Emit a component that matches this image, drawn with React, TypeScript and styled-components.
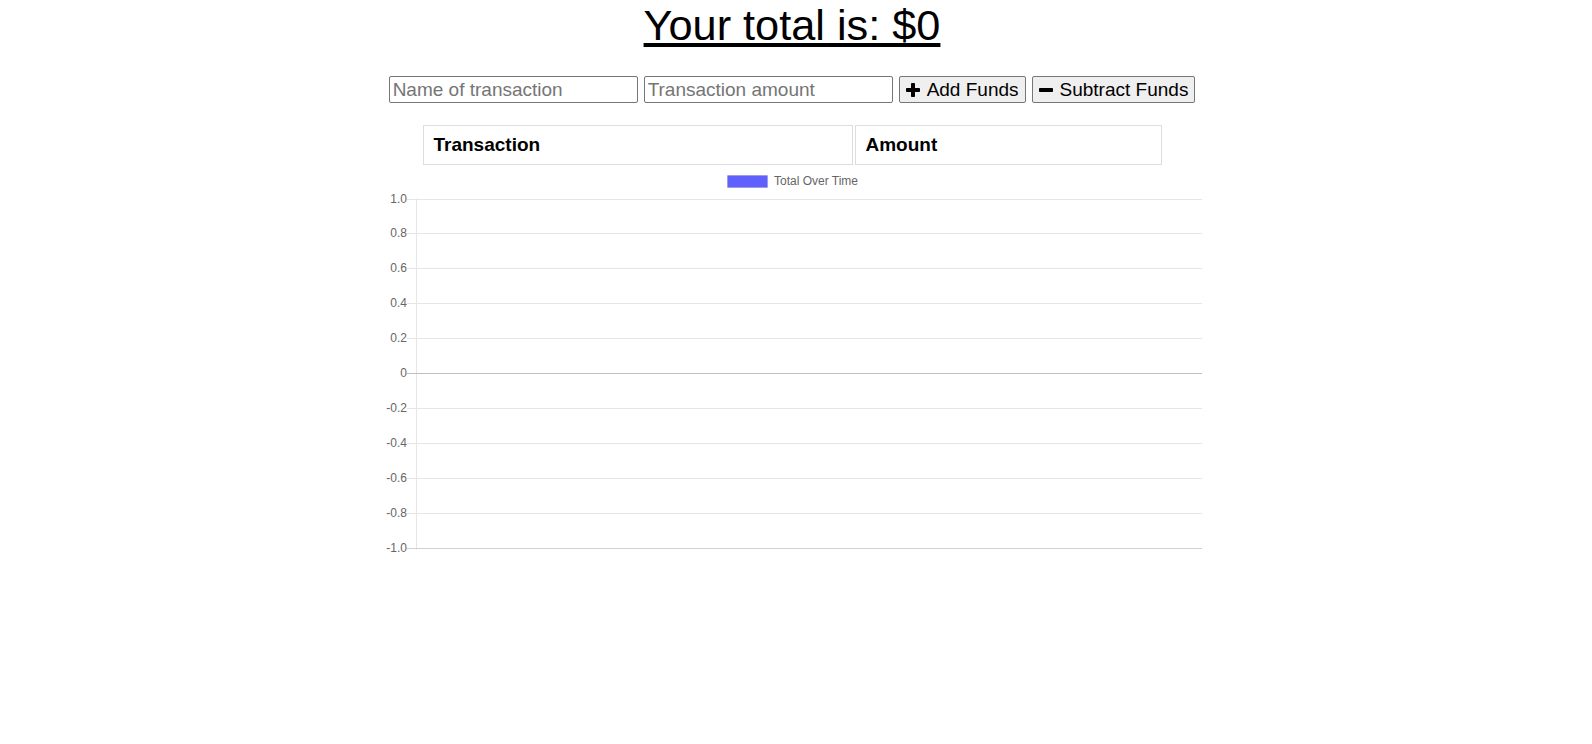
import styled, { createGlobalStyle } from "styled-components";

const GlobalStyle = createGlobalStyle`
  body {
    margin: 0;
    background: #fff;
    font-family: "Liberation Sans", Arial, sans-serif;
  }
`;

const Page = styled.div`
  display: flex;
  flex-direction: column;
  align-items: center;
  padding-right: 8px;
`;

const Total = styled.h1`
  margin: 1px 0 0;
  font-size: 43.3px;
  line-height: 49px;
  font-weight: 400;
  color: #000;
  text-decoration: underline;
`;

const Form = styled.div`
  display: flex;
  gap: 6px;
  margin-top: 26px;
`;

const Field = styled.input`
  box-sizing: border-box;
  width: 249px;
  height: 27px;
  padding: 1px 3px;
  border: 1px solid #767676;
  border-radius: 2px;
  background: #fff;
  font: 19px "Liberation Sans", Arial, sans-serif;
  color: #000;

  &::placeholder {
    color: #757575;
  }
`;

const Button = styled.button`
  box-sizing: border-box;
  display: flex;
  align-items: center;
  gap: 7px;
  height: 27px;
  padding: 1px 6px;
  border: 1px solid #767676;
  border-radius: 2px;
  background: #efefef;
  font: 19px "Liberation Sans", Arial, sans-serif;
  color: #000;
`;

const Ledger = styled.table`
  margin-top: 20px;
  width: 743px;
  table-layout: fixed;
  border-spacing: 2px;
`;

const HeadCell = styled.th<{ $width: number }>`
  box-sizing: border-box;
  width: ${(p) => p.$width}px;
  padding: 8px 10px;
  border: 1px solid #ddd;
  text-align: left;
  font-size: 19px;
  line-height: 22px;
  font-weight: 700;
  color: #000;
`;

const ChartBox = styled.div`
  width: 820px;
  height: 400px;
`;

const PlusIcon = () => (
  <svg width="14" height="14" viewBox="0 0 14 14">
    <rect x="0" y="5" width="14" height="4" rx="0.8" fill="#000" />
    <rect x="5" y="0" width="4" height="14" rx="0.8" fill="#000" />
  </svg>
);

const MinusIcon = () => (
  <svg width="14" height="14" viewBox="0 0 14 14">
    <rect x="0" y="5" width="14" height="4" rx="0.8" fill="#000" />
  </svg>
);

const ticks = [1, 0.8, 0.6, 0.4, 0.2, 0, -0.2, -0.4, -0.6, -0.8, -1];

const TotalChart = () => {
  const left = 34;
  const right = 820;
  const top = 31.5;
  const step = 34.9;
  const bottom = top + step * 10;

  return (
    <ChartBox>
      <svg width="820" height="400" viewBox="0 0 820 400">
        <rect x="345.5" y="8.5" width="40" height="12" fill="#6060ff" stroke="rgba(0,0,0,0.1)" />
        <text x="392" y="15" fontSize="12" fill="#666" dominantBaseline="middle"
          fontFamily="'Liberation Sans', Arial, sans-serif">
          Total Over Time
        </text>
        <line x1={left + 0.5} y1={top} x2={left + 0.5} y2={bottom + 2} stroke="#e6e6e6" />
        {ticks.map((t, i) => {
          const y = Math.round(top + step * i) + 0.5;
          const strong = t === 0;
          const edge = i === ticks.length - 1;
          return (
            <g key={t}>
              <line x1={25} y1={y} x2={right} y2={y}
                stroke={strong ? "#bfbfbf" : edge ? "#d0d0d0" : "#e6e6e6"} />
              <text x="25" y={y} fontSize="12" fill="#666" textAnchor="end"
                dominantBaseline="middle" fontFamily="'Liberation Sans', Arial, sans-serif">
                {t === 0 ? "0" : t.toFixed(1)}
              </text>
            </g>
          );
        })}
      </svg>
    </ChartBox>
  );
};

export default function App() {
  return (
    <Page>
      <GlobalStyle />
      <Total>Your total is: $0</Total>
      <Form>
        <Field type="text" placeholder="Name of transaction" />
        <Field type="number" placeholder="Transaction amount" />
        <Button>
          <PlusIcon />
          Add Funds
        </Button>
        <Button>
          <MinusIcon />
          Subtract Funds
        </Button>
      </Form>
      <Ledger>
        <thead>
          <tr>
            <HeadCell $width={430}>Transaction</HeadCell>
            <HeadCell $width={307}>Amount</HeadCell>
          </tr>
        </thead>
        <tbody />
      </Ledger>
      <TotalChart />
    </Page>
  );
}
